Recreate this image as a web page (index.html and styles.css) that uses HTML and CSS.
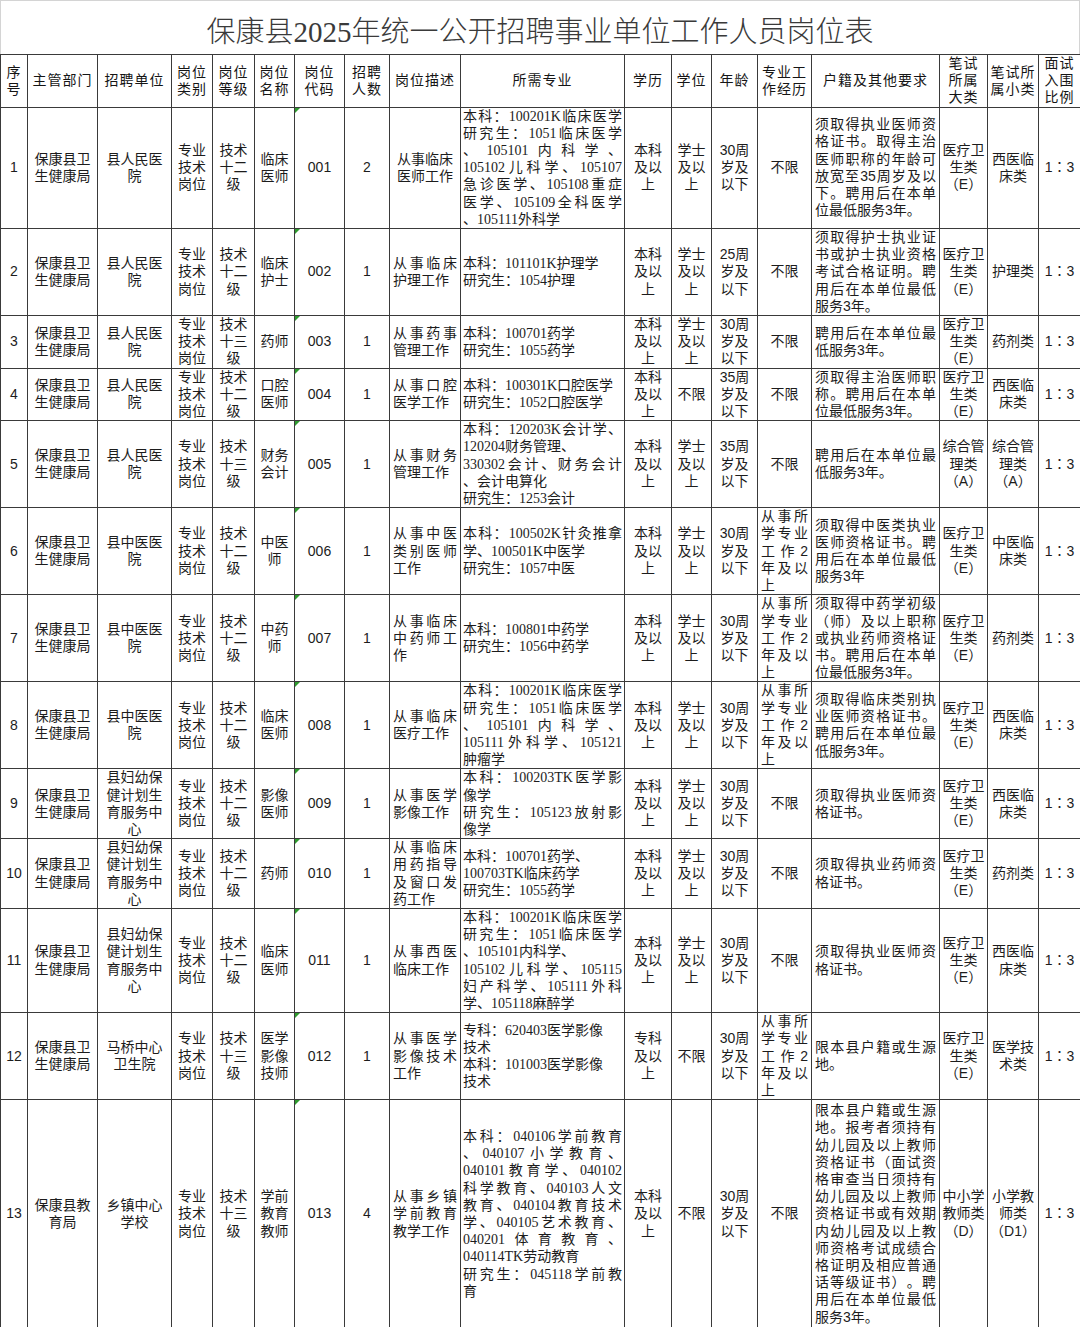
FILE: index.html
```html
<!DOCTYPE html>
<html lang="zh-CN">
<head>
<meta charset="utf-8">
<title>保康县2025年统一公开招聘事业单位工作人员岗位表</title>
<link rel="stylesheet" href="styles.css">
</head>
<body>
<div class="title">保康县2025年统一公开招聘事业单位工作人员岗位表</div>
<table class="sheet">
<colgroup>
<col class="w27"><col class="w70"><col class="w74"><col class="w41"><col class="w42"><col class="w40"><col class="w50"><col class="w45"><col class="w71"><col class="w164"><col class="w47"><col class="w40"><col class="w46"><col class="w54"><col class="w128"><col class="w48"><col class="w51"><col class="w42">
</colgroup>
<thead>
<tr>
<th>序<br>号</th><th>主管部门</th><th>招聘单位</th><th>岗位<br>类别</th><th>岗位<br>等级</th><th>岗位<br>名称</th><th>岗位<br>代码</th><th>招聘<br>人数</th><th>岗位描述</th><th>所需专业</th><th>学历</th><th>学位</th><th>年龄</th><th>专业工<br>作经历</th><th>户籍及其他要求</th><th>笔试<br>所属<br>大类</th><th>笔试所<br>属小类</th><th>面试<br>入围<br>比例</th>
</tr>
</thead>
<tbody>
<tr>
<td>1</td><td>保康县卫<br>生健康局</td><td>县人民医<br>院</td><td>专业<br>技术<br>岗位</td><td>技术<br>十二<br>级</td><td>临床<br>医师</td><td class="code">001</td><td>2</td>
<td>从事临床<br>医师工作</td>
<td class="m"><span class="j">本科：100201K临床医学</span><span class="j">研究生：1051临床医学</span><span class="j">、105101内科学、</span><span class="j">105102儿科学、105107</span><span class="j">急诊医学、105108重症</span><span class="j">医学、105109全科医学</span>、105111外科学</td>
<td>本科<br>及以<br>上</td><td>学士<br>及以<br>上</td><td>30周<br>岁及<br>以下</td><td>不限</td>
<td class="l"><span class="j">须取得执业医师资</span><span class="j">格证书。取得主治</span><span class="j">医师职称的年龄可</span><span class="j">放宽至35周岁及以</span><span class="j">下。聘用后在本单</span>位最低服务3年。</td>
<td>医疗卫<br>生类<br>（E）</td><td>西医临<br>床类</td><td class="r">1：3</td>
</tr>
<tr>
<td>2</td><td>保康县卫<br>生健康局</td><td>县人民医<br>院</td><td>专业<br>技术<br>岗位</td><td>技术<br>十二<br>级</td><td>临床<br>护士</td><td class="code">002</td><td>1</td>
<td class="l"><span class="j">从事临床</span>护理工作</td>
<td class="m">本科：101101K护理学<br>研究生：1054护理</td>
<td>本科<br>及以<br>上</td><td>学士<br>及以<br>上</td><td>25周<br>岁及<br>以下</td><td>不限</td>
<td class="l"><span class="j">须取得护士执业证</span><span class="j">书或护士执业资格</span><span class="j">考试合格证明。聘</span><span class="j">用后在本单位最低</span>服务3年。</td>
<td>医疗卫<br>生类<br>（E）</td><td>护理类</td><td class="r">1：3</td>
</tr>
<tr>
<td>3</td><td>保康县卫<br>生健康局</td><td>县人民医<br>院</td><td>专业<br>技术<br>岗位</td><td>技术<br>十三<br>级</td><td>药师</td><td class="code">003</td><td>1</td>
<td class="l"><span class="j">从事药事</span>管理工作</td>
<td class="m">本科：100701药学<br>研究生：1055药学</td>
<td>本科<br>及以<br>上</td><td>学士<br>及以<br>上</td><td>30周<br>岁及<br>以下</td><td>不限</td>
<td class="l"><span class="j">聘用后在本单位最</span>低服务3年。</td>
<td>医疗卫<br>生类<br>（E）</td><td>药剂类</td><td class="r">1：3</td>
</tr>
<tr>
<td>4</td><td>保康县卫<br>生健康局</td><td>县人民医<br>院</td><td>专业<br>技术<br>岗位</td><td>技术<br>十二<br>级</td><td>口腔<br>医师</td><td class="code">004</td><td>1</td>
<td class="l"><span class="j">从事口腔</span>医学工作</td>
<td class="m">本科：100301K口腔医学<br>研究生：1052口腔医学</td>
<td>本科<br>及以<br>上</td><td>不限</td><td>35周<br>岁及<br>以下</td><td>不限</td>
<td class="l"><span class="j">须取得主治医师职</span><span class="j">称。聘用后在本单</span>位最低服务3年。</td>
<td>医疗卫<br>生类<br>（E）</td><td>西医临<br>床类</td><td class="r">1：3</td>
</tr>
<tr>
<td>5</td><td>保康县卫<br>生健康局</td><td>县人民医<br>院</td><td>专业<br>技术<br>岗位</td><td>技术<br>十三<br>级</td><td>财务<br>会计</td><td class="code">005</td><td>1</td>
<td class="l"><span class="j">从事财务</span>管理工作</td>
<td class="m"><span class="j">本科：120203K会计学、</span>120204财务管理、<span class="j">330302会计、财务会计</span>、会计电算化<br>研究生：1253会计</td>
<td>本科<br>及以<br>上</td><td>学士<br>及以<br>上</td><td>35周<br>岁及<br>以下</td><td>不限</td>
<td class="l"><span class="j">聘用后在本单位最</span>低服务3年。</td>
<td>综合管<br>理类<br>（A）</td><td>综合管<br>理类<br>（A）</td><td class="r">1：3</td>
</tr>
<tr>
<td>6</td><td>保康县卫<br>生健康局</td><td>县中医医<br>院</td><td>专业<br>技术<br>岗位</td><td>技术<br>十二<br>级</td><td>中医<br>师</td><td class="code">006</td><td>1</td>
<td class="l"><span class="j">从事中医</span><span class="j">类别医师</span>工作</td>
<td class="m"><span class="j">本科：100502K针灸推拿</span>学、100501K中医学<br>研究生：1057中医</td>
<td>本科<br>及以<br>上</td><td>学士<br>及以<br>上</td><td>30周<br>岁及<br>以下</td>
<td class="l"><span class="j">从事所</span><span class="j">学专业</span><span class="j">工作2</span><span class="j">年及以</span>上</td>
<td class="l"><span class="j">须取得中医类执业</span><span class="j">医师资格证书。聘</span><span class="j">用后在本单位最低</span>服务3年</td>
<td>医疗卫<br>生类<br>（E）</td><td>中医临<br>床类</td><td class="r">1：3</td>
</tr>
<tr>
<td>7</td><td>保康县卫<br>生健康局</td><td>县中医医<br>院</td><td>专业<br>技术<br>岗位</td><td>技术<br>十二<br>级</td><td>中药<br>师</td><td class="code">007</td><td>1</td>
<td class="l"><span class="j">从事临床</span><span class="j">中药师工</span>作</td>
<td class="m">本科：100801中药学<br>研究生：1056中药学</td>
<td>本科<br>及以<br>上</td><td>学士<br>及以<br>上</td><td>30周<br>岁及<br>以下</td>
<td class="l"><span class="j">从事所</span><span class="j">学专业</span><span class="j">工作2</span><span class="j">年及以</span>上</td>
<td class="l"><span class="j">须取得中药学初级</span><span class="j">（师）及以上职称</span><span class="j">或执业药师资格证</span><span class="j">书。聘用后在本单</span>位最低服务3年。</td>
<td>医疗卫<br>生类<br>（E）</td><td>药剂类</td><td class="r">1：3</td>
</tr>
<tr>
<td>8</td><td>保康县卫<br>生健康局</td><td>县中医医<br>院</td><td>专业<br>技术<br>岗位</td><td>技术<br>十二<br>级</td><td>临床<br>医师</td><td class="code">008</td><td>1</td>
<td class="l"><span class="j">从事临床</span>医疗工作</td>
<td class="m"><span class="j">本科：100201K临床医学</span><span class="j">研究生：1051临床医学</span><span class="j">、105101内科学、</span><span class="j">105111外科学、105121</span>肿瘤学</td>
<td>本科<br>及以<br>上</td><td>学士<br>及以<br>上</td><td>30周<br>岁及<br>以下</td>
<td class="l"><span class="j">从事所</span><span class="j">学专业</span><span class="j">工作2</span><span class="j">年及以</span>上</td>
<td class="l"><span class="j">须取得临床类别执</span><span class="j">业医师资格证书。</span><span class="j">聘用后在本单位最</span>低服务3年。</td>
<td>医疗卫<br>生类<br>（E）</td><td>西医临<br>床类</td><td class="r">1：3</td>
</tr>
<tr>
<td>9</td><td>保康县卫<br>生健康局</td><td>县妇幼保<br>健计划生<br>育服务中<br>心</td><td>专业<br>技术<br>岗位</td><td>技术<br>十二<br>级</td><td>影像<br>医师</td><td class="code">009</td><td>1</td>
<td class="l"><span class="j">从事医学</span>影像工作</td>
<td class="m"><span class="j">本科：100203TK医学影</span>像学<span class="j">研究生：105123放射影</span>像学</td>
<td>本科<br>及以<br>上</td><td>学士<br>及以<br>上</td><td>30周<br>岁及<br>以下</td><td>不限</td>
<td class="l"><span class="j">须取得执业医师资</span>格证书。</td>
<td>医疗卫<br>生类<br>（E）</td><td>西医临<br>床类</td><td class="r">1：3</td>
</tr>
<tr>
<td>10</td><td>保康县卫<br>生健康局</td><td>县妇幼保<br>健计划生<br>育服务中<br>心</td><td>专业<br>技术<br>岗位</td><td>技术<br>十二<br>级</td><td>药师</td><td class="code">010</td><td>1</td>
<td class="l"><span class="j">从事临床</span><span class="j">用药指导</span><span class="j">及窗口发</span>药工作</td>
<td class="m">本科：100701药学、<br>100703TK临床药学<br>研究生：1055药学</td>
<td>本科<br>及以<br>上</td><td>学士<br>及以<br>上</td><td>30周<br>岁及<br>以下</td><td>不限</td>
<td class="l"><span class="j">须取得执业药师资</span>格证书。</td>
<td>医疗卫<br>生类<br>（E）</td><td>药剂类</td><td class="r">1：3</td>
</tr>
<tr>
<td>11</td><td>保康县卫<br>生健康局</td><td>县妇幼保<br>健计划生<br>育服务中<br>心</td><td>专业<br>技术<br>岗位</td><td>技术<br>十二<br>级</td><td>临床<br>医师</td><td class="code">011</td><td>1</td>
<td class="l"><span class="j">从事西医</span>临床工作</td>
<td class="m"><span class="j">本科：100201K临床医学</span><span class="j">研究生：1051临床医学</span>、105101内科学、<span class="j">105102儿科学、105115</span><span class="j">妇产科学、105111外科</span>学、105118麻醉学</td>
<td>本科<br>及以<br>上</td><td>学士<br>及以<br>上</td><td>30周<br>岁及<br>以下</td><td>不限</td>
<td class="l"><span class="j">须取得执业医师资</span>格证书。</td>
<td>医疗卫<br>生类<br>（E）</td><td>西医临<br>床类</td><td class="r">1：3</td>
</tr>
<tr>
<td>12</td><td>保康县卫<br>生健康局</td><td>马桥中心<br>卫生院</td><td>专业<br>技术<br>岗位</td><td>技术<br>十三<br>级</td><td>医学<br>影像<br>技师</td><td class="code">012</td><td>1</td>
<td class="l"><span class="j">从事医学</span><span class="j">影像技术</span>工作</td>
<td class="m">专科：620403医学影像<br>技术<br>本科：101003医学影像<br>技术</td>
<td>专科<br>及以<br>上</td><td>不限</td><td>30周<br>岁及<br>以下</td>
<td class="l"><span class="j">从事所</span><span class="j">学专业</span><span class="j">工作2</span><span class="j">年及以</span>上</td>
<td class="l"><span class="j">限本县户籍或生源</span>地。</td>
<td>医疗卫<br>生类<br>（E）</td><td>医学技<br>术类</td><td class="r">1：3</td>
</tr>
<tr>
<td>13</td><td>保康县教<br>育局</td><td>乡镇中心<br>学校</td><td>专业<br>技术<br>岗位</td><td>技术<br>十三<br>级</td><td>学前<br>教育<br>教师</td><td class="code">013</td><td>4</td>
<td class="l"><span class="j">从事乡镇</span><span class="j">学前教育</span>教学工作</td>
<td class="m"><span class="j">本科：040106学前教育</span><span class="j">、040107小学教育、</span><span class="j">040101教育学、040102</span><span class="j">科学教育、040103人文</span><span class="j">教育、040104教育技术</span><span class="j">学、040105艺术教育、</span><span class="j">040201体育教育、</span>040114TK劳动教育<span class="j">研究生：045118学前教</span>育</td>
<td>本科<br>及以<br>上</td><td>不限</td><td>30周<br>岁及<br>以下</td><td>不限</td>
<td class="l tall"><span class="j">限本县户籍或生源</span><span class="j">地。报考者须持有</span><span class="j">幼儿园及以上教师</span><span class="j">资格证书（面试资</span><span class="j">格审查当日须持有</span><span class="j">幼儿园及以上教师</span><span class="j">资格证书或有效期</span><span class="j">内幼儿园及以上教</span><span class="j">师资格考试成绩合</span><span class="j">格证明及相应普通</span><span class="j">话等级证书）。聘</span><span class="j">用后在本单位最低</span>服务3年。</td>
<td>中小学<br>教师类<br>（D）</td><td>小学教<br>师类<br>（D1）</td><td class="r">1：3</td>
</tr>
</tbody>
</table>
</body>
</html>
```

FILE: styles.css
```css
html, body {
  margin: 0;
  padding: 0;
  background: #ffffff;
}

body {
  width: 1080px;
  font-family: "Liberation Sans", "Noto Sans CJK SC", sans-serif;
  color: #1c1c1c;
  text-spacing-trim: space-all;
}

.title {
  box-sizing: border-box;
  height: 54px;
  padding-top: 3px;
  border-top: 1px solid #d4d4d4;
  border-left: 1px solid #d4d4d4;
  border-right: 1px solid #d4d4d4;
  display: flex;
  align-items: center;
  justify-content: center;
  font-family: "Liberation Serif", "Noto Sans CJK SC", serif;
  font-size: 29px;
  font-weight: 300;
  color: #3a3a3a;
}

.sheet {
  width: 1080px;
  border-collapse: collapse;
  table-layout: fixed;
  font-size: 14px;
  line-height: 17.2px;
}

.w27 { width: 27px; }
.w70 { width: 70px; }
.w74 { width: 74px; }
.w41 { width: 41px; }
.w42 { width: 42px; }
.w40 { width: 40px; }
.w50 { width: 50px; }
.w45 { width: 45px; }
.w71 { width: 71px; }
.w164 { width: 164px; }
.w47 { width: 47px; }
.w46 { width: 46px; }
.w54 { width: 54px; }
.w128 { width: 128px; }
.w48 { width: 48px; }
.w51 { width: 51px; }

.sheet th,
.sheet td {
  border: 1px solid #3a3a3a;
  padding: 0 1px;
  text-align: center;
  vertical-align: middle;
  font-weight: normal;
  overflow: hidden;
}

.sheet th {
  letter-spacing: 1px;
  color: #151515;
}

.sheet td.l {
  text-align: left;
  padding: 0 3px 0 3px;
}

.sheet td.tall {
  padding-top: 2px;
  padding-bottom: 2px;
}

.sheet td.m {
  text-align: left;
  padding: 0 2px 0 2px;
  font-family: "Liberation Serif", "Noto Sans CJK SC", serif;
}

.sheet td.r {
  font-family: "Liberation Sans", "Noto Sans CJK TC", sans-serif;
}

.j {
  display: block;
  text-align: justify;
  text-align-last: justify;
}

.sheet td.code {
  position: relative;
}

.sheet td.code::before {
  content: "";
  position: absolute;
  left: 0;
  top: 0;
  width: 0;
  height: 0;
  border-top: 5px solid #2e9a2e;
  border-right: 5px solid transparent;
}
```
